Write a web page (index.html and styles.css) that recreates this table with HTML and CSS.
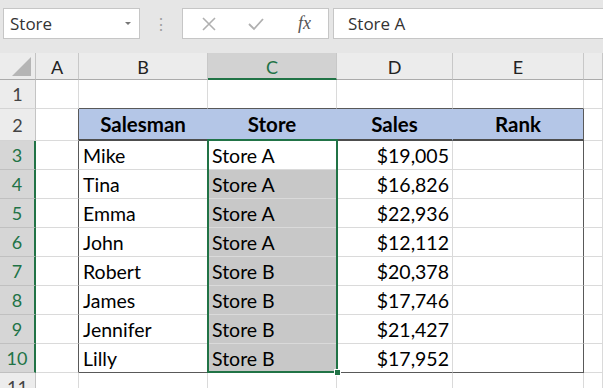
FILE: index.html
```html
<!DOCTYPE html>
<html lang="en">
<head>
    <meta charset="UTF-8">
    <meta name="viewport" content="width=device-width, initial-scale=1.0">
    <title>Rank by Store</title>
    <link rel="stylesheet" href="styles.css">
</head>
<body>

<!-- Formula bar -->
<div class="formula-bar">
    <div class="name-box">
        <span>Store</span>
        <span class="caret"></span>
    </div>
    <div class="grip">&#8942;</div>
    <div class="fx-buttons">
        <svg class="fx-icon" width="14" height="14" viewBox="0 0 14 14"><path d="M1 1 L13 13 M13 1 L1 13" stroke="#b0b0b0" stroke-width="1.6" fill="none"/></svg>
        <svg class="fx-icon" width="16" height="14" viewBox="0 0 16 14"><path d="M1 7 L6 12 L15 2" stroke="#b0b0b0" stroke-width="1.8" fill="none"/></svg>
        <span class="fx-label">fx</span>
    </div>
    <div class="formula-input">Store A</div>
</div>

<!-- Sheet -->
<div class="sheet">
    <div class="row head-row">
        <div class="rh corner"><span class="corner-tri"></span></div>
        <div class="cell ca">A</div>
        <div class="cell cb">B</div>
        <div class="cell cc picked">C</div>
        <div class="cell cd">D</div>
        <div class="cell ce">E</div>
        <div class="cell cf"></div>
    </div>

    <div class="row r1">
        <div class="rh">1</div>
        <div class="cell ca"></div>
        <div class="cell cb top"></div>
        <div class="cell cc top"></div>
        <div class="cell cd top"></div>
        <div class="cell ce top"></div>
        <div class="cell cf"></div>
    </div>

    <div class="row r2">
        <div class="rh">2</div>
        <div class="cell ca edge"></div>
        <div class="cell cb th">Salesman</div>
        <div class="cell cc th">Store</div>
        <div class="cell cd th">Sales</div>
        <div class="cell ce th edge">Rank</div>
        <div class="cell cf"></div>
    </div>

    <div class="row">
        <div class="rh sel">3</div>
        <div class="cell ca edge"></div>
        <div class="cell cb">Mike</div>
        <div class="cell cc">Store A</div>
        <div class="cell cd num">$19,005</div>
        <div class="cell ce edge"></div>
        <div class="cell cf"></div>
    </div>
    <div class="row">
        <div class="rh sel">4</div>
        <div class="cell ca edge"></div>
        <div class="cell cb">Tina</div>
        <div class="cell cc hl">Store A</div>
        <div class="cell cd num">$16,826</div>
        <div class="cell ce edge"></div>
        <div class="cell cf"></div>
    </div>
    <div class="row">
        <div class="rh sel">5</div>
        <div class="cell ca edge"></div>
        <div class="cell cb">Emma</div>
        <div class="cell cc hl">Store A</div>
        <div class="cell cd num">$22,936</div>
        <div class="cell ce edge"></div>
        <div class="cell cf"></div>
    </div>
    <div class="row">
        <div class="rh sel">6</div>
        <div class="cell ca edge"></div>
        <div class="cell cb">John</div>
        <div class="cell cc hl">Store A</div>
        <div class="cell cd num">$12,112</div>
        <div class="cell ce edge"></div>
        <div class="cell cf"></div>
    </div>
    <div class="row">
        <div class="rh sel">7</div>
        <div class="cell ca edge"></div>
        <div class="cell cb">Robert</div>
        <div class="cell cc hl">Store B</div>
        <div class="cell cd num">$20,378</div>
        <div class="cell ce edge"></div>
        <div class="cell cf"></div>
    </div>
    <div class="row">
        <div class="rh sel">8</div>
        <div class="cell ca edge"></div>
        <div class="cell cb">James</div>
        <div class="cell cc hl">Store B</div>
        <div class="cell cd num">$17,746</div>
        <div class="cell ce edge"></div>
        <div class="cell cf"></div>
    </div>
    <div class="row">
        <div class="rh sel">9</div>
        <div class="cell ca edge"></div>
        <div class="cell cb">Jennifer</div>
        <div class="cell cc hl">Store B</div>
        <div class="cell cd num">$21,427</div>
        <div class="cell ce edge"></div>
        <div class="cell cf"></div>
    </div>
    <div class="row last">
        <div class="rh sel">10</div>
        <div class="cell ca edge"></div>
        <div class="cell cb">Lilly</div>
        <div class="cell cc hl">Store B</div>
        <div class="cell cd num">$17,952</div>
        <div class="cell ce edge"></div>
        <div class="cell cf"></div>
    </div>

    <div class="row r11">
        <div class="rh">11</div>
        <div class="cell ca"></div>
        <div class="cell cb"></div>
        <div class="cell cc"></div>
        <div class="cell cd"></div>
        <div class="cell ce"></div>
        <div class="cell cf"></div>
    </div>

    <!-- selected range C3:C10 -->
    <div class="selection"></div>
    <div class="fill-handle"></div>
</div>

</body>
</html>
```

FILE: styles.css
```css
body {
    margin: 0;
    width: 603px;
    height: 388px;
    overflow: hidden;
    background-color: #e6e6e6;
    font-family: Lato, "Open Sans", sans-serif;
    color: #000;
}

/* Formula bar */
.formula-bar {
    display: flex;
    align-items: flex-start;
    height: 53px;
    box-sizing: border-box;
    padding: 8px 0 0 3px;
}

.name-box,
.fx-buttons,
.formula-input {
    height: 31px;
    box-sizing: border-box;
    background-color: white;
    border: 1px solid #c6c6c6;
    display: flex;
    align-items: center;
}

.name-box {
    width: 137px;
    padding: 0 8px 0 6px;
    justify-content: space-between;
    font-family: "Open Sans", sans-serif;
    font-size: 17px;
    color: #333;
}

.caret {
    width: 0;
    height: 0;
    border-left: 3px solid transparent;
    border-right: 3px solid transparent;
    border-top: 3px solid #777;
}

.grip {
    width: 42px;
    text-align: center;
    line-height: 31px;
    color: #a0a0a0;
    font-size: 16px;
}

.fx-buttons {
    width: 147px;
    padding: 0 0 0 19px;
}

.fx-icon {
    margin-right: 32px;
}

.fx-icon + .fx-icon {
    margin-right: 34px;
}

.fx-label {
    font-family: "Liberation Serif", serif;
    font-style: italic;
    font-size: 18px;
    color: #555;
}

.formula-input {
    flex: 1;
    margin-left: 4px;
    padding-left: 14px;
    font-family: "Open Sans", sans-serif;
    font-size: 17px;
    color: #333;
    border-right: none;
}

/* Sheet */
.sheet {
    position: relative;
    background-color: white;
    height: 349px;
}

.row {
    display: flex;
    height: 29px;
}

.head-row { height: 27px; }
.r2 { height: 32px; }

.rh,
.cell {
    box-sizing: border-box;
    height: 100%;
    border-right: 1px solid #dadada;
    border-bottom: 1px solid #dadada;
    font-size: 19.5px;
    display: flex;
    align-items: center;
    white-space: nowrap;
    overflow: hidden;
}

.rh {
    width: 36px;
    justify-content: center;
    background-color: #ececec;
    color: #444;
    font-size: 18px;
    border-right: 1px solid #c4c4c4;
    border-bottom: 1px solid #d4d4d4;
}

.rh.sel {
    background-color: #d6d6d6;
    color: #217346;
    border-right: 2px solid #217346;
    border-bottom-color: #c0c0c0;
}

.ca { width: 43px; }
.cb { width: 129px; padding-left: 4px; }
.cc { width: 129px; padding-left: 4px; }
.cd { width: 116px; padding-right: 3px; }
.ce { width: 131px; }
.cf { flex: 1; }

/* Column headers */
.head-row .cell {
    background-color: #ececec;
    justify-content: center;
    padding: 2px 0 0;
    font-size: 18px;
    color: #222;
    border-right-color: #c8c8c8;
    border-bottom: 1px solid #ababab;
}

.head-row .rh {
    border-bottom: 1px solid #ababab;
}

.head-row .cell.picked {
    background-color: #d2d2d2;
    color: #217346;
    border-bottom: 2px solid #217346;
    padding-top: 3px;
}

.corner {
    position: relative;
}

.corner-tri {
    position: absolute;
    right: 4px;
    bottom: 3px;
    width: 0;
    height: 0;
    border-left: 19px solid transparent;
    border-bottom: 19px solid #b5b5b5;
}

/* Table B2:E10 */
.cell.top { border-bottom-color: #595959; }
.cell.edge { border-right-color: #595959; }

.cell.th {
    background-color: #b4c6e7;
    font-weight: bold;
    font-size: 20.5px;
    justify-content: center;
    padding: 0;
    border-bottom: 2px solid #4d4d4d;
}

.r2 .cc.th,
.r2 .cb.th,
.r2 .cd.th {
    border-right-color: #b4c6e7;
}

.num { justify-content: flex-end; }

.hl { background-color: #c8c8c8; }

.last .cb,
.last .cc,
.last .cd,
.last .ce {
    border-bottom-color: #595959;
}

/* Selection overlay */
.selection {
    position: absolute;
    left: 207px;
    top: 86px;
    width: 131px;
    height: 234px;
    box-sizing: border-box;
    border: 2px solid #217346;
    pointer-events: none;
}

.fill-handle {
    position: absolute;
    left: 334px;
    top: 316px;
    width: 5px;
    height: 5px;
    background-color: #217346;
    border: 1px solid white;
}
```
